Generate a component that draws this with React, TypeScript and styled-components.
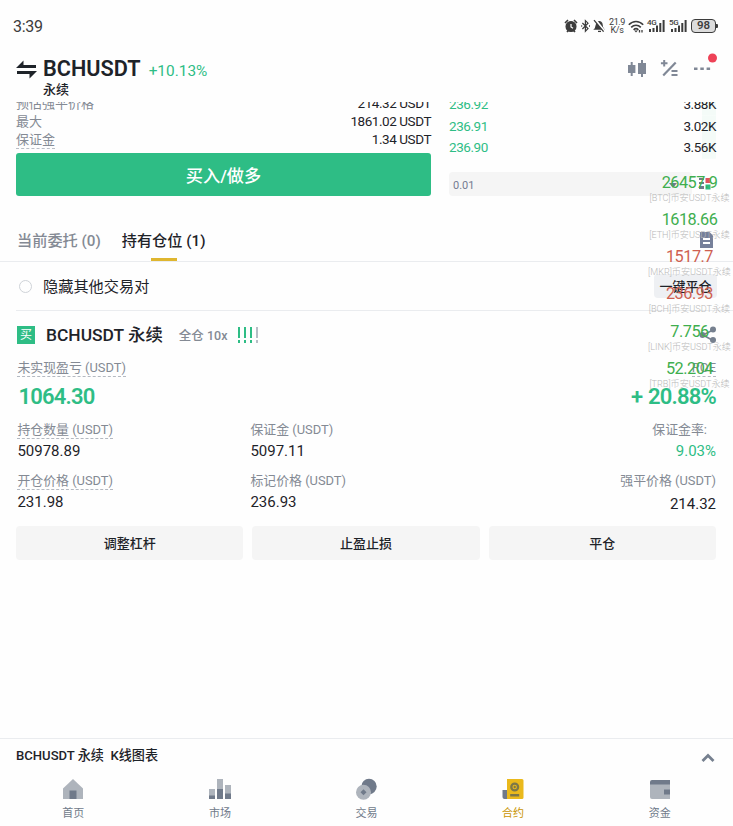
import React from "react";
import styled, { createGlobalStyle } from "styled-components";

const GREEN = "#2ebd85";
const TEXT = "#1e2329";
const MUTED = "#848a94";
const LINE = "#eaecef";

const GlobalStyle = createGlobalStyle`
  * { box-sizing: border-box; }
  body {
    margin: 0;
    background: #fefefe;
    color: ${TEXT};
    font-family: Roboto, "Noto Sans CJK SC", sans-serif;
  }
`;

const Screen = styled.div`
  position: relative;
  width: 733px;
  height: 826px;
  overflow: hidden;
  display: flex;
  flex-direction: column;
  white-space: nowrap;
  line-height: 1;
`;

/* ---------- status bar ---------- */
const StatusBar = styled.div`
  height: 52px;
  padding: 0 15px 0 13px;
  display: flex;
  align-items: center;
  justify-content: space-between;
  color: #3c3c3c;
  flex: none;
`;
const Clock = styled.span`
  font-size: 16px;
  letter-spacing: -0.3px;
  margin-top: 2px;
`;
const StatusIcons = styled.div`
  display: flex;
  align-items: center;
`;
const NetSpeed = styled.div`
  width: 18px;
  margin: 0 2px 0 3px;
  font-size: 9px;
  line-height: 8px;
  text-align: center;
  letter-spacing: -0.4px;
`;
const Battery = styled.div`
  width: 25px;
  height: 14px;
  margin-left: 3px;
  border: 1.3px solid #3c3c3c;
  border-radius: 4px;
  background: #dcdcdc;
  font-size: 11.5px;
  font-weight: 600;
  display: flex;
  align-items: center;
  justify-content: center;
`;
const BatteryTip = styled.div`
  width: 2px;
  height: 4px;
  background: #3c3c3c;
  border-radius: 0 1px 1px 0;
`;

/* ---------- header ---------- */
const Header = styled.header`
  height: 50px;
  padding: 0 16px;
  display: flex;
  justify-content: space-between;
  flex: none;
`;
const Pair = styled.div`
  display: grid;
  grid-template-columns: 27px auto;
  grid-template-rows: 34px 7px;
  align-items: center;
`;
const PairLine = styled.div`
  display: flex;
  align-items: baseline;
  gap: 8px;
`;
const PairName = styled.span`
  font-size: 21.7px;
  font-weight: 600;
`;
const Change = styled.span`
  font-size: 15.4px;
  color: ${GREEN};
`;
const PairKind = styled.span`
  grid-column: 2;
  font-size: 13px;
  font-weight: 500;
`;
const Tools = styled.div`
  display: flex;
`;

/* ---------- order form and book ---------- */
const Trade = styled.section`
  height: 118px;
  padding: 0 17px 0 16px;
  display: flex;
  gap: 18px;
  overflow: hidden;
  flex: none;
`;
const Form = styled.div`
  width: 415px;
  margin-top: -7px;
`;
const FormRow = styled.div`
  height: 18px;
  display: flex;
  align-items: center;
  justify-content: space-between;
`;
const FormLabel = styled.span<{ $dotted?: boolean }>`
  font-size: 13px;
  line-height: 17px;
  color: ${MUTED};
  border-bottom: 1px ${(p) => (p.$dotted ? "dashed #b9bec6" : "solid transparent")};
`;
const FormValue = styled.span`
  font-size: 13.5px;
  letter-spacing: -0.45px;
`;
const BuyButton = styled.button`
  width: 415px;
  height: 43px;
  margin: 4px 0 0;
  padding: 0 0 1px;
  border: 0;
  border-radius: 3px;
  background: ${GREEN};
  color: #fff;
  font: 500 17.2px Roboto, "Noto Sans CJK SC", sans-serif;
`;
const Book = styled.div`
  flex: 1;
  margin-top: -8px;
`;
const BookRow = styled.div<{ $depth: number }>`
  height: 21.5px;
  display: flex;
  align-items: center;
  justify-content: space-between;
  font-size: 13.5px;
  letter-spacing: -0.45px;
  background: linear-gradient(#f4fbf8, #f4fbf8) right / ${(p) => p.$depth}px 100% no-repeat;
`;
const BookPrice = styled.span`
  color: ${GREEN};
`;
const BookTools = styled.div`
  height: 24px;
  margin-top: 13.5px;
  display: flex;
  align-items: center;
  justify-content: space-between;
`;
const Precision = styled.div`
  width: 243px;
  height: 24px;
  padding: 2px 15px 0 4px;
  border-radius: 4px;
  background: #f5f5f5;
  color: #767c92;
  font-size: 11px;
  display: flex;
  align-items: center;
  justify-content: space-between;
`;

/* ---------- tabs ---------- */
const Tabs = styled.div`
  height: 42px;
  padding: 0 20px 0 17px;
  border-bottom: 1px solid ${LINE};
  display: flex;
  align-items: stretch;
  gap: 21px;
  flex: none;
`;
const Tab = styled.div<{ $active?: boolean }>`
  display: flex;
  flex-direction: column;
  align-items: center;
  justify-content: space-between;
  padding-top: 14px;
  font-size: 15.2px;
  font-weight: 500;
  color: ${(p) => (p.$active ? TEXT : MUTED)};
  &::after {
    content: "";
    width: 26px;
    height: 3px;
    background: ${(p) => (p.$active ? "#dfb62f" : "transparent")};
  }
`;
const TabIcon = styled.div`
  margin-left: auto;
  padding-top: 12px;
`;

const FilterRow = styled.div`
  height: 49px;
  margin-left: 16px;
  padding-right: 16px;
  border-bottom: 1px solid ${LINE};
  display: flex;
  align-items: center;
  flex: none;
`;
const Radio = styled.span`
  width: 13px;
  height: 13px;
  margin: 0 11px 0 3px;
  border: 1px solid #cfd3d8;
  border-radius: 50%;
`;
const FilterText = styled.span`
  font-size: 15.2px;
  padding-top: 3px;
`;
const CloseAll = styled.div`
  width: 63px;
  height: 24px;
  margin-left: auto;
  padding-top: 1px;
  border-radius: 4px;
  background: #eef0f3;
  font-size: 13px;
  font-weight: 500;
  display: flex;
  align-items: center;
  justify-content: center;
`;

/* ---------- position card ---------- */
const Position = styled.section`
  padding: 0 17px 0 16px;
  flex: 1;
`;
const TitleRow = styled.div`
  height: 48px;
  display: flex;
  align-items: center;
`;
const SideBadge = styled.span`
  width: 18px;
  height: 18px;
  margin: 0 11px 0 1px;
  background: ${GREEN};
  color: #fff;
  font-size: 12px;
  display: flex;
  align-items: center;
  justify-content: center;
`;
const Title = styled.span`
  padding-top: 2px;
  font-size: 17.4px;
  font-weight: 500;
`;
const Leverage = styled.span`
  margin: 3px 10px 0 16px;
  font-size: 12.5px;
  color: ${MUTED};
  font-weight: 500;
`;
const ShareSlot = styled.div`
  margin-left: auto;
  height: 18px;
`;
const Stats = styled.div<{ $height: number }>`
  height: ${(p) => p.$height}px;
  display: grid;
  grid-template-columns: 233px 1fr 1fr;
`;
const Stat = styled.div<{ $end?: boolean }>`
  display: flex;
  flex-direction: column;
  align-items: ${(p) => (p.$end ? "flex-end" : "flex-start")};
  padding-left: 1.4px;
`;
const StatLabel = styled.span<{ $dotted?: boolean; $inset?: number }>`
  height: 18px;
  margin-right: ${(p) => p.$inset ?? 0}px;
  line-height: 18px;
  font-size: 12.9px;
  font-weight: 400;
  color: ${MUTED};
  border-bottom: 1px ${(p) => (p.$dotted ? "dashed #b4b9c1" : "solid transparent")};
`;
const StatValue = styled.span<{ $green?: boolean; $drop?: number }>`
  margin-top: ${(p) => 5 + (p.$drop ?? 0)}px;
  font-size: 15px;
  letter-spacing: 0;
  color: ${(p) => (p.$green ? GREEN : TEXT)};
`;
const BigValue = styled.span`
  margin-top: 9px;
  padding-left: 1px;
  font-size: 22px;
  font-weight: 600;
  letter-spacing: -0.8px;
  word-spacing: 1px;
  color: ${GREEN};
`;
const Actions = styled.div`
  display: grid;
  grid-template-columns: repeat(3, 1fr);
  gap: 9px;
`;
const ActionButton = styled.button`
  height: 34px;
  padding: 0 0 2px;
  border: 0;
  border-radius: 4px;
  background: #f5f5f5;
  color: ${TEXT};
  font: 500 13px Roboto, "Noto Sans CJK SC", sans-serif;
`;

/* ---------- bottom ---------- */
const ChartBar = styled.div`
  height: 37px;
  padding: 0 18px 0 16px;
  border-top: 1px solid ${LINE};
  display: flex;
  align-items: center;
  justify-content: space-between;
  font-size: 13.1px;
  font-weight: 500;
  white-space: pre;
  flex: none;
`;
const ChartTitle = styled.span`
  padding-bottom: 3px;
`;
const Nav = styled.nav`
  height: 51px;
  padding-top: 3px;
  display: grid;
  grid-template-columns: repeat(5, 1fr);
  flex: none;
`;
const NavItem = styled.div<{ $active?: boolean }>`
  display: flex;
  flex-direction: column;
  align-items: center;
  gap: 8px;
  font-size: 11px;
  color: ${(p) => (p.$active ? "#c99400" : "#707a8a")};
`;

/* ---------- floating price ticker ---------- */
const Ticker = styled.div`
  position: absolute;
  top: 172.5px;
  left: 645.5px;
  width: 88px;
  pointer-events: none;
`;
const Quote = styled.div`
  height: 37.3px;
  display: flex;
  flex-direction: column;
  align-items: center;
`;
const QuotePrice = styled.span<{ $down?: boolean }>`
  height: 19px;
  line-height: 19px;
  font-size: 16.3px;
  letter-spacing: -0.5px;
  color: ${(p) => (p.$down ? "#cf5f50" : "#3fae4e")};
`;
const QuoteName = styled.span`
  height: 12px;
  line-height: 12px;
  font-size: 9.1px;
  font-weight: 300;
  color: #b9b9b9;
`;

const Signal = () => (
  <svg width="17" height="12" viewBox="0 0 17 12" fill="#3c3c3c">
    <path d="M1 9h2v3H1zM4.5 8h2v4h-2zM8 5.5h2V12H8zM11.3 3h2v9h-2zM14.6 0h2v12h-2z" />
  </svg>
);
const SignalBox = styled.div`
  position: relative;
  display: flex;
  margin-left: 4px;
  width: 18px;
`;
const SignalTag = styled.span`
  position: absolute;
  left: -1px;
  top: -1px;
  font-size: 8px;
  font-weight: 500;
  letter-spacing: -0.3px;
`;

const StatusGlyphs = () => (
  <svg width="41" height="14" viewBox="0 0 41 14" fill="none" stroke="#3c3c3c" strokeWidth="1.3">
    <circle cx="7" cy="7.5" r="4.9" fill="#3c3c3c" />
    <path d="M1 4 4 1M13 4l-3-3M3 13l1.4-1.6M11 13l-1.4-1.6" strokeWidth="1.6" />
    <path d="M7 5v3l2 1.3" stroke="#fff" strokeWidth="1.2" />
    <path d="m18.4 4 5.600 5.600-2.600 2.600V1.600L24 4.200 18.400 10" strokeWidth="1.2" />
    <path d="M17.2 7h1M25 7h1" />
    <path d="M31 10c1.4-1.2.8-6 2.800-7 2-1.100 4.300.4 4.300 3 0 2.200.5 3 1.400 4z" fill="#3c3c3c" />
    <path d="M34 12.4h3" />
    <path d="m31.5 1 9 11" stroke="#fff" strokeWidth="2" />
    <path d="m30 1.200 9.600 11.400" />
  </svg>
);
const Wifi = () => (
  <svg width="16" height="13" viewBox="0 0 16 13" fill="none" stroke="#3c3c3c" strokeWidth="1.6">
    <path d="M.8 4.8c4.2-4.5 10.2-4.5 14.4 0M3.2 7.4c2.8-2.9 6.8-2.9 9.6 0M5.6 9.8c1.5-1.4 3.3-1.4 4.8 0" />
    <path d="m8 12.6-1.8-2h3.6z" fill="#3c3c3c" stroke="none" />
    <path d="M11.5 10v2.600M14 10v2.600" strokeWidth="1.3" />
  </svg>
);
const SwapIcon = () => (
  <svg width="21" height="19" viewBox="0 0 21 19" fill={TEXT}>
    <path d="M0 8 7.500 .500V5H20v3zM21 11l-7.500 7.500V14H1v-3z" />
  </svg>
);
const ToolIcons = () => (
  <svg width="90" height="34" viewBox="0 0 90 34" fill="#808896">
    <path d="M1 13h2.700v-3h2v3h2.700v8H5.700v3h-2v-3H1zM11 11h3V8h2v3h3v11h-3v3h-2v-3h-3z" />
    <path d="M36.200 8h2v2.200h2.300v2h-2.300v2.300h-2v-2.300h-2.300v-2h2.300zM44.500 18h6v2h-6zM44.500 22h6v2h-6z" />
    <path d="m36.200 23.500 12.500-13" stroke="#808896" strokeWidth="2.200" />
    <path d="M67 15.500h3.500V18H67zM73.300 15.500h3.500V18h-3.500zM79.600 15.500h3.500V18h-3.500z" />
    <circle cx="85.500" cy="6" r="4.500" fill="#ee4257" />
  </svg>
);

const navItems: { name: string; icon: React.ReactNode; active?: boolean }[] = [
  {
    name: "首页",
    icon: (
      <>
        <path d="M11 1 21 10.500V21H1V10.500z" fill="#aeb4bc" />
        <path d="M7.500 12.500h7V21h-7z" fill="#707a8a" />
      </>
    ),
  },
  {
    name: "市场",
    icon: (
      <>
        <path d="M0 11h6v7H0zM8 1h6v10H8zM16 7h6v9h-6z" fill="#aeb4bc" />
        <path d="M0 17.500h6V21H0zM8 11h6v10H8zM16 15.500h6V21h-6z" fill="#707a8a" />
      </>
    ),
  },
  {
    name: "交易",
    icon: (
      <>
        <circle cx="14" cy="8.500" r="7.700" fill="#707a8a" />
        <circle cx="8.500" cy="14.300" r="7.500" fill="#aeb4bc" />
        <path d="m8.500 11.300 3 3-3 3-3-3z" fill="#707a8a" />
      </>
    ),
  },
  {
    name: "合约",
    active: true,
    icon: (
      <>
        <path d="M5 1H20q1.500 0 1.500 1.500v17Q21.500 21 20 21H4l1-3z" fill="#eab91c" />
        <path d="M.500 12H5v9H2.500q-2 0-2-2z" fill="#707a8a" />
        <circle cx="12.700" cy="9" r="3.400" fill="#eab91c" stroke="#7d7748" strokeWidth="2.300" />
        <path d="m12.700 7.500 1.500 1.500-1.500 1.500L11.200 9zM8.200 16h9v2.500h-9z" fill="#7d7748" />
      </>
    ),
  },
  {
    name: "资金",
    icon: (
      <>
        <path d="M1 5h20v16H3q-2 0-2-2z" fill="#aeb4bc" />
        <path d="M3 2h18v4.500H1V4q0-2 2-2zM15 11.500h6v5h-6z" fill="#707a8a" />
      </>
    ),
  },
];

const quotes = [
  { price: "26457.9", symbol: "BTC" },
  { price: "1618.66", symbol: "ETH" },
  { price: "1517.7", symbol: "MKR", down: true },
  { price: "236.93", symbol: "BCH", down: true },
  { price: "7.756", symbol: "LINK" },
  { price: "52.204", symbol: "TRB" },
];

const book = [
  { price: "236.92", amount: "3.88K", depth: 14 },
  { price: "236.91", amount: "3.02K", depth: 14 },
  { price: "236.90", amount: "3.56K", depth: 14 },
];

export default function App() {
  return (
    <Screen>
      <GlobalStyle />
      <StatusBar>
        <Clock>3:39</Clock>
        <StatusIcons>
          <StatusGlyphs />
          <NetSpeed>
            21.9
            <br />
            K/s
          </NetSpeed>
          <Wifi />
          <SignalBox>
            <SignalTag>4G</SignalTag>
            <Signal />
          </SignalBox>
          <SignalBox>
            <SignalTag>5G</SignalTag>
            <Signal />
          </SignalBox>
          <Battery>98</Battery>
          <BatteryTip />
        </StatusIcons>
      </StatusBar>

      <Header>
        <Pair>
          <SwapIcon />
          <PairLine>
            <PairName>BCHUSDT</PairName>
            <Change>+10.13%</Change>
          </PairLine>
          <PairKind>永续</PairKind>
        </Pair>
        <Tools>
          <ToolIcons />
        </Tools>
      </Header>

      <Trade>
        <Form>
          <FormRow>
            <FormLabel>预估强平价格</FormLabel>
            <FormValue>214.32 USDT</FormValue>
          </FormRow>
          <FormRow>
            <FormLabel>最大</FormLabel>
            <FormValue>1861.02 USDT</FormValue>
          </FormRow>
          <FormRow>
            <FormLabel $dotted>保证金</FormLabel>
            <FormValue>1.34 USDT</FormValue>
          </FormRow>
          <BuyButton>买入/做多</BuyButton>
        </Form>
        <Book>
          {book.map((b) => (
            <BookRow key={b.price} $depth={b.depth}>
              <BookPrice>{b.price}</BookPrice>
              <span>{b.amount}</span>
            </BookRow>
          ))}
          <BookTools>
            <Precision>
              0.01
              <svg width="8" height="5" viewBox="0 0 8 5" fill="#707a8a">
                <path d="M0 0h8L4 5z" />
              </svg>
            </Precision>
            <svg width="18" height="14" viewBox="0 0 18 14">
              <path d="M1 1h5v2H1zM1 5h5v2H1zM1 9h5v3H1z" fill="#707a8a" />
              <path d="M7.500 1h5v5h-5z" fill="#e0525f" />
              <path d="M7.500 7.500h5v5h-5z" fill={GREEN} />
            </svg>
          </BookTools>
        </Book>
      </Trade>

      <Tabs>
        <Tab>当前委托 (0)</Tab>
        <Tab $active>持有仓位 (1)</Tab>
        <TabIcon>
          <svg width="13" height="16" viewBox="0 0 13 16">
            <path d="M0 0h9.500L13 3.500V16H0z" fill="#76809a" />
            <path d="M3 7h7M3 11h7" stroke="#fff" strokeWidth="1.800" />
          </svg>
        </TabIcon>
      </Tabs>

      <FilterRow>
        <Radio />
        <FilterText>隐藏其他交易对</FilterText>
        <CloseAll>一键平仓</CloseAll>
      </FilterRow>

      <Position>
        <TitleRow>
          <SideBadge>买</SideBadge>
          <Title>BCHUSDT 永续</Title>
          <Leverage>全仓 10x</Leverage>
          <svg width="24" height="18" viewBox="0 0 24 18">
            <path d="M2 1v11M8 1v11M14 1v11M2 14v3M8 14v3M14 14v3" stroke={GREEN} strokeWidth="2" />
            <path d="M20 1v11M20 14v3" stroke="#b7bdc6" strokeWidth="2" />
          </svg>
          <ShareSlot>
            <svg width="17" height="18" viewBox="0 0 17 18" fill="#76808f">
              <path d="M14 4 4 9l10 5.500" fill="none" stroke="#76808f" strokeWidth="1.700" />
              <circle cx="14" cy="3.500" r="3" />
              <circle cx="3.500" cy="9" r="3" />
              <circle cx="14" cy="14" r="3" />
            </svg>
          </ShareSlot>
        </TitleRow>
        <Stats $height={62}>
          <Stat>
            <StatLabel $dotted>未实现盈亏 (USDT)</StatLabel>
            <BigValue>1064.30</BigValue>
          </Stat>
          <Stat />
          <Stat $end>
            <StatLabel $dotted>ROE</StatLabel>
            <BigValue>+ 20.88%</BigValue>
          </Stat>
        </Stats>
        <Stats $height={51}>
          <Stat>
            <StatLabel $dotted>持仓数量 (USDT)</StatLabel>
            <StatValue>50978.89</StatValue>
          </Stat>
          <Stat>
            <StatLabel>保证金 (USDT)</StatLabel>
            <StatValue>5097.11</StatValue>
          </Stat>
          <Stat $end>
            <StatLabel $inset={9}>保证金率:</StatLabel>
            <StatValue $green>9.03%</StatValue>
          </Stat>
        </Stats>
        <Stats $height={54}>
          <Stat>
            <StatLabel $dotted>开仓价格 (USDT)</StatLabel>
            <StatValue>231.98</StatValue>
          </Stat>
          <Stat>
            <StatLabel>标记价格 (USDT)</StatLabel>
            <StatValue>236.93</StatValue>
          </Stat>
          <Stat $end>
            <StatLabel>强平价格 (USDT)</StatLabel>
            <StatValue $drop={2}>214.32</StatValue>
          </Stat>
        </Stats>
        <Actions>
          <ActionButton>调整杠杆</ActionButton>
          <ActionButton>止盈止损</ActionButton>
          <ActionButton>平仓</ActionButton>
        </Actions>
      </Position>

      <ChartBar>
        <ChartTitle>{"BCHUSDT 永续  K线图表"}</ChartTitle>
        <svg width="14" height="9" viewBox="0 0 14 9" fill="none" stroke="#76808f" strokeWidth="2.800">
          <path d="m1.500 8 5.500-5.500L12.500 8" />
        </svg>
      </ChartBar>
      <Nav>
        {navItems.map((n) => (
          <NavItem key={n.name} $active={n.active}>
            <svg width="22" height="22" viewBox="0 0 22 22">
              {n.icon}
            </svg>
            {n.name}
          </NavItem>
        ))}
      </Nav>

      <Ticker>
        {quotes.map((q) => (
          <Quote key={q.symbol}>
            <QuotePrice $down={q.down}>{q.price}</QuotePrice>
            <QuoteName>[{q.symbol}]币安USDT永续</QuoteName>
          </Quote>
        ))}
      </Ticker>
    </Screen>
  );
}
